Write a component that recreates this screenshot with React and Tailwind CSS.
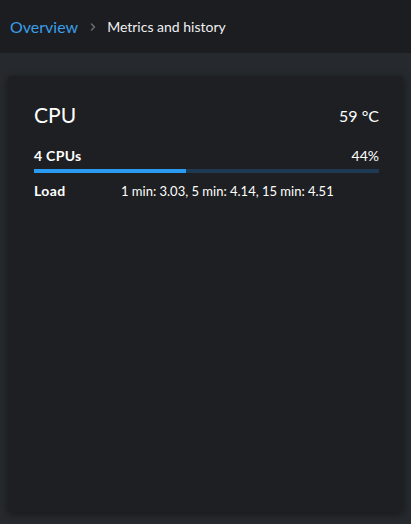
import { ChevronRight } from 'lucide-react';

const font = { fontFamily: 'Lato, "Noto Sans", sans-serif' };

export default function App() {
  const pct = 44;

  return (
    <div className="flex h-[524px] w-[411px] flex-col bg-[#26292d] text-white" style={font}>
      <nav className="flex h-[53px] shrink-0 items-center bg-[#1b1d21] px-[10px]">
        <a href="#" className="text-[16px] text-[#3c9ee8]">Overview</a>
        <ChevronRight className="ml-[9px] mr-[8px] h-3 w-3 text-[#6a6e73]" strokeWidth={3} />
        <span className="text-[14px] text-[#f0f0f0]">Metrics and history</span>
      </nav>

      <main className="flex-1 px-2 pt-[23px] pb-[12px]">
        <section className="h-full rounded-[3px] bg-[#1e1f22] pl-[26px] pr-6 pt-[23px] shadow-[0_2px_8px_rgba(0,0,0,0.45)]">
          <div className="flex items-center justify-between">
            <h2 className="text-[21px] leading-8">CPU</h2>
            <span className="mt-[2px] text-[16px]">59 °C</span>
          </div>

          <div className="mt-[14px] flex items-center justify-between text-[14px]">
            <span className="font-bold tracking-[0.3px]">4 CPUs</span>
            <span>{pct}%</span>
          </div>
          <div className="mt-[3px] h-[4px] w-full bg-[#1e3a52]">
            <div className="h-full bg-[#2b9af3]" style={{ width: `${pct}%` }} />
          </div>

          <div className="mt-[7px] flex items-baseline text-[14px]">
            <span className="w-[87px] font-bold tracking-[0.4px]">Load</span>
            <span className="text-[13px]">1 min: 3.03, 5 min: 4.14, 15 min: 4.51</span>
          </div>
        </section>
      </main>
    </div>
  );
}
